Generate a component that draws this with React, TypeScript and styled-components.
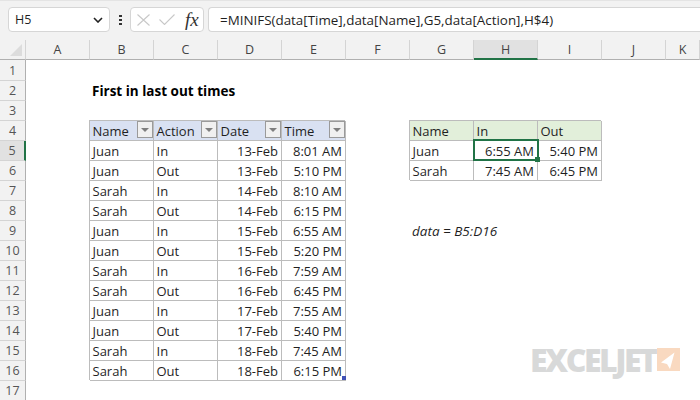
import styled, { createGlobalStyle } from "styled-components";

const GlobalStyle = createGlobalStyle`
  html, body {
    margin: 0;
    padding: 0;
    background: #ffffff;
  }
`;

const Sheet = styled.div`
  position: relative;
  width: 700px;
  height: 400px;
  overflow: hidden;
  background: #ffffff;
  font-family: "Open Sans", "Noto Sans", sans-serif;
  color: #1f1f1f;
`;

const Toolbar = styled.div`
  height: 40px;
  box-sizing: border-box;
  padding: 6px 0 0 8px;
  display: flex;
  align-items: flex-start;
  background: #f2f2f2;
  border-top: 1px solid #e4e4e4;
`;

const NameBox = styled.div`
  width: 102px;
  height: 25px;
  box-sizing: border-box;
  padding: 0 6px 0 6px;
  display: flex;
  align-items: center;
  justify-content: space-between;
  background: #ffffff;
  border: 1px solid #d6d6d6;
  border-radius: 4px;
  font-size: 12.5px;
`;

const Dots = styled.div`
  width: 20px;
  height: 25px;
  display: flex;
  flex-direction: column;
  align-items: center;
  justify-content: center;
  gap: 2px;

  span {
    width: 3px;
    height: 2px;
    background: #333333;
  }
`;

const ButtonGroup = styled.div`
  width: 74px;
  height: 25px;
  box-sizing: border-box;
  padding: 0 0 0 6px;
  margin-right: 4px;
  display: flex;
  align-items: center;
  gap: 9px;
  background: #ffffff;
  border: 1px solid #d6d6d6;
  border-radius: 4px;
`;

const Fx = styled.span`
  margin-left: 1px;
  font-family: "Liberation Serif", serif;
  font-style: italic;
  font-size: 19px;
  line-height: 20px;
  color: #333333;
`;

const FormulaBar = styled.div`
  flex: 1;
  height: 25px;
  box-sizing: border-box;
  padding-left: 11px;
  display: flex;
  align-items: center;
  background: #ffffff;
  border: 1px solid #d6d6d6;
  border-right: none;
  border-radius: 4px 0 0 4px;
  font-size: 13.4px;
  white-space: nowrap;
`;

const Grid = styled.div`
  display: grid;
  grid-template-columns: 26px repeat(10, 64px) 34px;
  grid-template-rows: 20px 21px;
  grid-auto-rows: 20px;
`;

const Corner = styled.div`
  background: #f2f2f2;
  border-right: 1px solid #d4d4d4;
  border-bottom: 1px solid #b0b0b0;
  box-sizing: border-box;
  display: flex;
  align-items: flex-end;
  justify-content: flex-end;
  padding: 0 3px 3px 0;
`;

const ColHead = styled.div<{ $active?: boolean }>`
  box-sizing: border-box;
  display: flex;
  align-items: center;
  justify-content: center;
  font-size: 12.5px;
  color: #444444;
  background: ${(p) => (p.$active ? "#e1e1e1" : "#f2f2f2")};
  border-right: 1px solid #d4d4d4;
  border-bottom: ${(p) => (p.$active ? "2px solid #217346" : "1px solid #b0b0b0")};
`;

const RowHead = styled.div<{ $active?: boolean }>`
  box-sizing: border-box;
  display: flex;
  align-items: center;
  justify-content: center;
  font-size: 12.5px;
  color: #555555;
  background: ${(p) => (p.$active ? "#e1e1e1" : "#f2f2f2")};
  border-right: ${(p) => (p.$active ? "2px solid #217346" : "1px solid #b0b0b0")};
  border-bottom: 1px solid #d4d4d4;
`;

const Blank = styled.div``;

const Title = styled.div`
  grid-column: span 4;
  padding-left: 2px;
  display: flex;
  align-items: center;
  font-size: 13.5px;
  font-weight: 700;
  color: #000000;
`;

const Note = styled.div`
  grid-column: span 2;
  padding-left: 2px;
  display: flex;
  align-items: center;
  font-size: 13.5px;
  font-style: italic;
  white-space: nowrap;
`;

const Cell = styled.div<{ $bg?: string; $right?: boolean }>`
  position: relative;
  box-sizing: border-box;
  padding: 0 ${(p) => (p.$right ? "4px" : "1px")} 1px 2.5px;
  display: flex;
  align-items: center;
  justify-content: ${(p) => (p.$right ? "flex-end" : "space-between")};
  font-size: 13px;
  white-space: nowrap;
  background: ${(p) => p.$bg ?? "#ffffff"};
  box-shadow: -1px -1px 0 0 #bcbcbc, inset -1px -1px 0 0 #bcbcbc;
`;

const FilterButton = styled.div`
  width: 16px;
  height: 17px;
  align-self: flex-start;
  box-sizing: border-box;
  display: flex;
  align-items: center;
  justify-content: center;
  background: #f0f0f0;
  border: 1px solid #9a9a9a;

  &::after {
    content: "";
    border-left: 4px solid transparent;
    border-right: 4px solid transparent;
    border-top: 4px solid #7f7f7f;
  }
`;

const ResizeMark = styled.div`
  position: absolute;
  right: 0;
  bottom: 1px;
  width: 4px;
  height: 4px;
  background: #3f51b5;
`;

const Selection = styled.div`
  position: absolute;
  z-index: 2;
  top: -2px;
  right: -1px;
  bottom: 0;
  left: -1px;
  border: 2px solid #217346;
  pointer-events: none;

  &::after {
    content: "";
    position: absolute;
    right: -3px;
    bottom: -3px;
    width: 5px;
    height: 5px;
    background: #217346;
  }
`;

const Logo = styled.div`
  position: absolute;
  left: 530px;
  top: 348px;
  display: flex;
  align-items: flex-start;
  gap: 2px;
`;

const LogoText = styled.span`
  font-family: "Open Sans", sans-serif;
  font-size: 32px;
  font-weight: 800;
  line-height: 24px;
  letter-spacing: -2.5px;
  color: #d8d9d9;
`;

const LogoMark = styled.div`
  width: 23px;
  height: 23px;
  display: flex;
  background: #f9d9c0;
`;

const columns = ["A", "B", "C", "D", "E", "F", "G", "H", "I", "J", "K"];

const rows = [
  ["Juan", "In", "13-Feb", "8:01 AM"],
  ["Juan", "Out", "13-Feb", "5:10 PM"],
  ["Sarah", "In", "14-Feb", "8:10 AM"],
  ["Sarah", "Out", "14-Feb", "6:15 PM"],
  ["Juan", "In", "15-Feb", "6:55 AM"],
  ["Juan", "Out", "15-Feb", "5:20 PM"],
  ["Sarah", "In", "16-Feb", "7:59 AM"],
  ["Sarah", "Out", "16-Feb", "6:45 PM"],
  ["Juan", "In", "17-Feb", "7:55 AM"],
  ["Juan", "Out", "17-Feb", "5:40 PM"],
  ["Sarah", "In", "18-Feb", "7:45 AM"],
  ["Sarah", "Out", "18-Feb", "6:15 PM"],
];

const summary: Record<number, string[]> = {
  5: ["Juan", "6:55 AM", "5:40 PM"],
  6: ["Sarah", "7:45 AM", "6:45 PM"],
};

function Blanks({ count }: { count: number }) {
  return (
    <>
      {Array.from({ length: count }, (_, i) => (
        <Blank key={i} />
      ))}
    </>
  );
}

function SheetRow({ n }: { n: number }) {
  const data = n >= 5 && n <= 16 ? rows[n - 5] : null;
  const side = summary[n];

  // columns A..E
  let left;
  if (n === 2) {
    left = (
      <>
        <Blank />
        <Title>First in last out times</Title>
      </>
    );
  } else if (n === 4) {
    left = (
      <>
        <Blank />
        {["Name", "Action", "Date", "Time"].map((h) => (
          <Cell key={h} $bg="#d9e1f2">
            {h}
            <FilterButton />
          </Cell>
        ))}
      </>
    );
  } else if (data) {
    left = (
      <>
        <Blank />
        <Cell>{data[0]}</Cell>
        <Cell>{data[1]}</Cell>
        <Cell $right>{data[2]}</Cell>
        <Cell $right>
          {data[3]}
          {n === 16 && <ResizeMark />}
        </Cell>
      </>
    );
  } else {
    left = <Blanks count={5} />;
  }

  // columns F..K
  let right;
  if (n === 4) {
    right = (
      <>
        <Blank />
        {["Name", "In", "Out"].map((h) => (
          <Cell key={h} $bg="#e2efda">
            {h}
          </Cell>
        ))}
        <Blanks count={2} />
      </>
    );
  } else if (side) {
    right = (
      <>
        <Blank />
        <Cell>{side[0]}</Cell>
        <Cell $right>
          {side[1]}
          {n === 5 && <Selection />}
        </Cell>
        <Cell $right>{side[2]}</Cell>
        <Blanks count={2} />
      </>
    );
  } else if (n === 9) {
    right = (
      <>
        <Blank />
        <Note>data = B5:D16</Note>
        <Blanks count={3} />
      </>
    );
  } else {
    right = <Blanks count={6} />;
  }

  return (
    <>
      <RowHead $active={n === 5}>{n}</RowHead>
      {left}
      {right}
    </>
  );
}

export default function App() {
  return (
    <>
      <GlobalStyle />
      <Sheet>
        <Toolbar>
          <NameBox>
            H5
            <svg width="10" height="6" viewBox="0 0 10 6">
              <path d="M1 1l4 4 4-4" fill="none" stroke="#222" strokeWidth="1.6" />
            </svg>
          </NameBox>
          <Dots>
            <span />
            <span />
            <span />
          </Dots>
          <ButtonGroup>
            <svg width="13" height="12" viewBox="0 0 13 12">
              <path d="M.5.5l12 11M12.500.5l-12 11" stroke="#c8c8c8" strokeWidth="1.1" />
            </svg>
            <svg width="16" height="11" viewBox="0 0 16 11">
              <path d="M.5 5.500l5 5L15.500.5" fill="none" stroke="#c8c8c8" strokeWidth="1.1" />
            </svg>
            <Fx>fx</Fx>
          </ButtonGroup>
          <FormulaBar>=MINIFS(data[Time],data[Name],G5,data[Action],H$4)</FormulaBar>
        </Toolbar>
        <Grid>
          <Corner>
            <svg width="12" height="12" viewBox="0 0 12 12">
              <path d="M12 0v12H0z" fill="#dcdcdc" />
            </svg>
          </Corner>
          {columns.map((c) => (
            <ColHead key={c} $active={c === "H"}>
              {c}
            </ColHead>
          ))}
          {Array.from({ length: 17 }, (_, i) => (
            <SheetRow key={i} n={i + 1} />
          ))}
        </Grid>
        <Logo>
          <LogoText>EXCELJET</LogoText>
          <LogoMark>
            <svg width="23" height="23" viewBox="0 0 23 23">
              <path d="M17.500 4.500L4 14.500l6 1.500 3 5z" fill="#ffffff" />
            </svg>
          </LogoMark>
        </Logo>
      </Sheet>
    </>
  );
}
